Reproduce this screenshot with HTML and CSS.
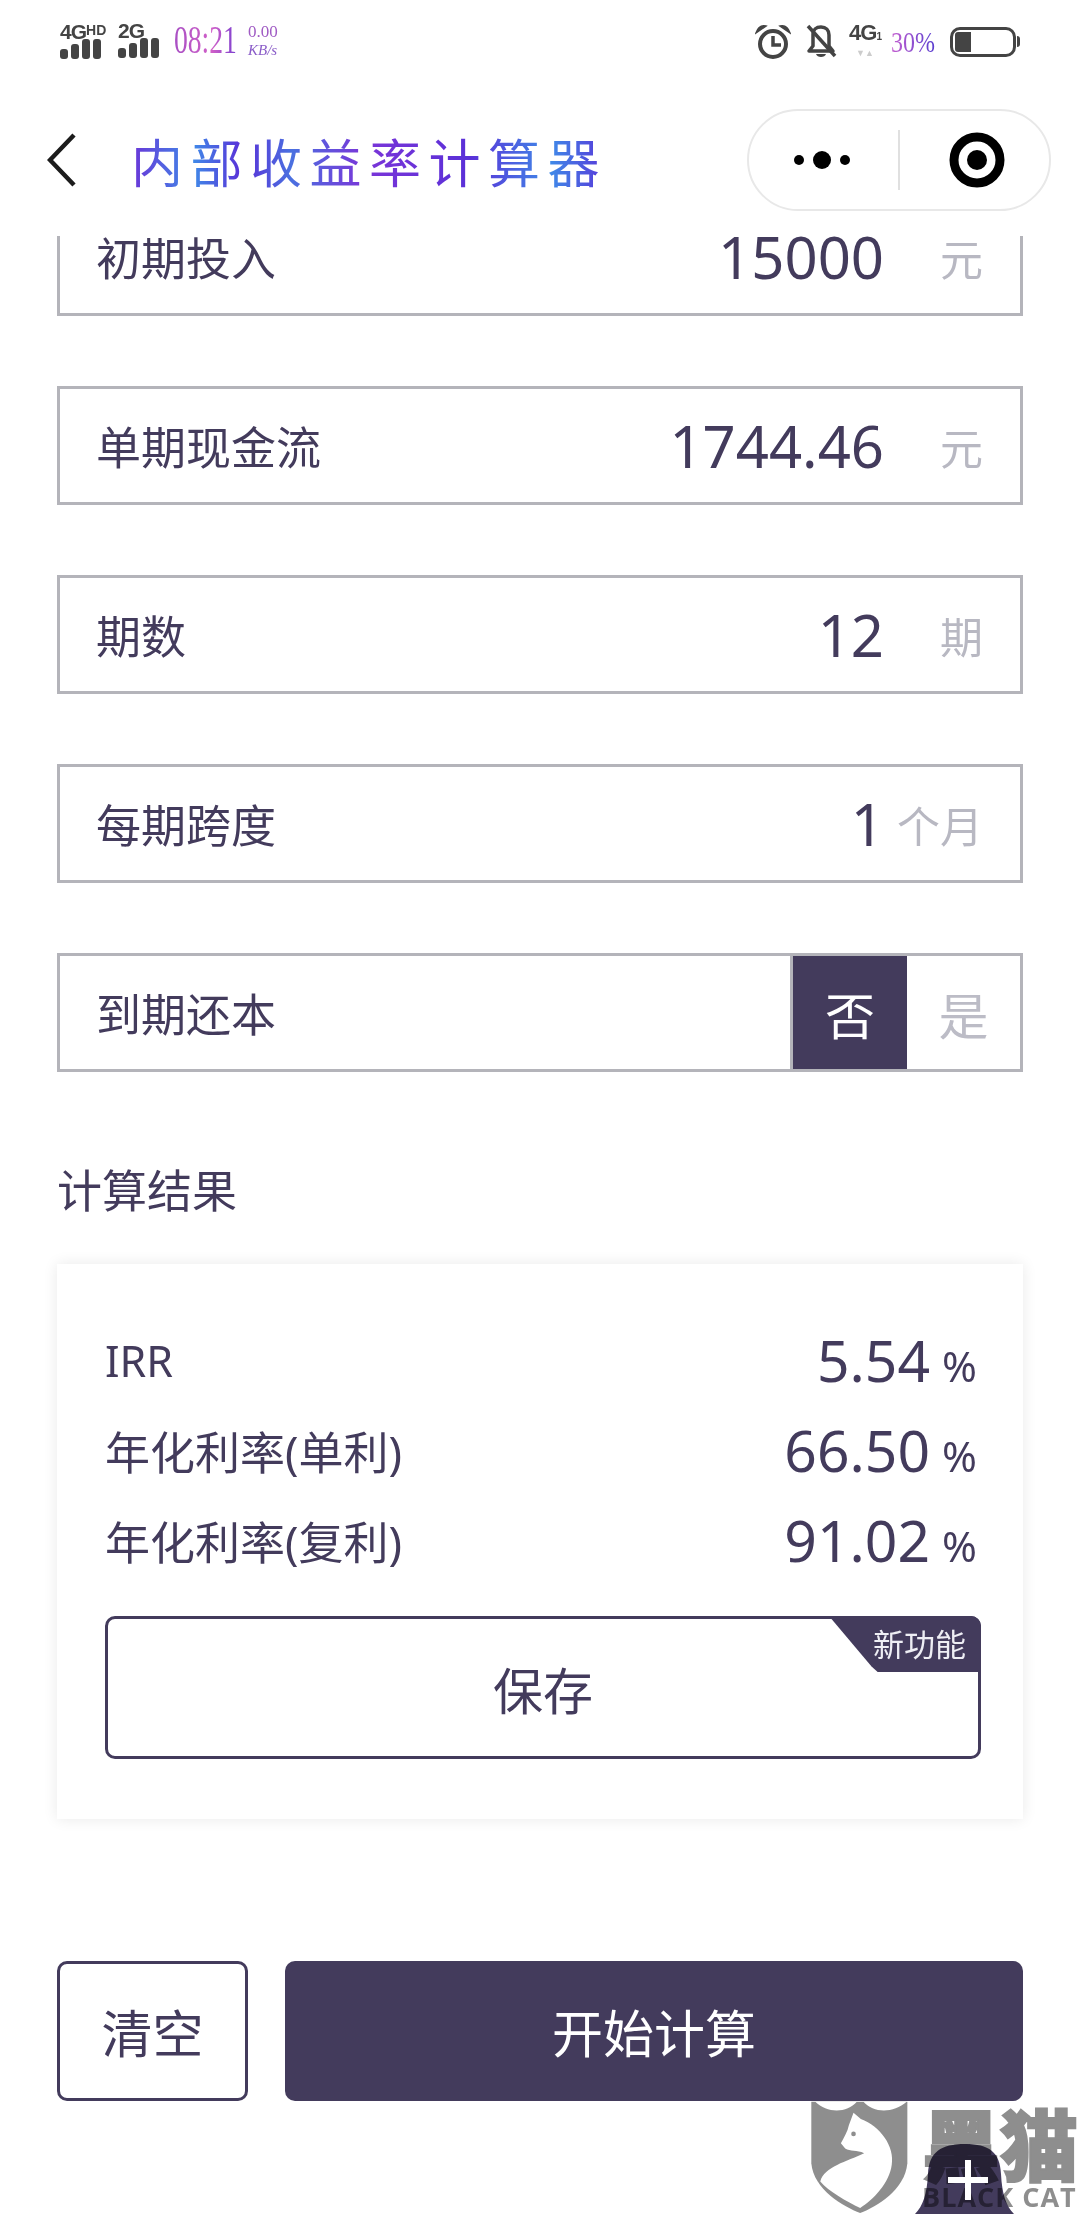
FILE: index.html
```html
<!DOCTYPE html>
<html lang="zh-CN">
  <head>
    <meta charset="UTF-8" />
    <meta name="viewport" content="width=device-width, initial-scale=1.0" />
    <title>内部收益率计算器</title>
    <link rel="stylesheet" href="styles.css">
  </head>
  <body>
    <div class="page">
      <div class="status-bar">
        <div class="status-left">
          <div class="sim">
            <span class="sim-name">4G<b>HD</b></span>
            <div class="bars"><i class="b1"></i><i class="b2"></i><i class="b3"></i><i class="b3"></i></div>
          </div>
          <div class="sim sim-two">
            <span class="sim-name">2G</span>
            <div class="bars"><i class="b1"></i><i class="b2"></i><i class="b3"></i><i class="b3"></i></div>
          </div>
          <span class="time">08:21</span>
          <div class="speed"><span>0.00</span><span class="speed-unit">KB/s</span></div>
        </div>
        <div class="status-right">
          <svg class="alarm" width="36" height="36" viewBox="0 0 36 36">
            <circle cx="18" cy="20" r="13" fill="none" stroke="#444" stroke-width="4" />
            <path d="M18 12v9h8" fill="none" stroke="#444" stroke-width="3.5" />
            <path d="M1 9 C3 3 7 1 11 2 Z M35 9 C33 3 29 1 25 2 Z" fill="#444" stroke="#444" stroke-width="1.5" />
          </svg>
          <svg class="bell" width="32" height="36" viewBox="0 0 32 36">
            <path d="M8 10 C8 6 11 3 16 3 C21 3 24 6 24 11 V22 L28 27 H4 L8 22 Z" fill="none" stroke="#444" stroke-width="3.5" stroke-linejoin="round" />
            <path d="M11 30 C12 34 20 34 21 30 Z" fill="#444" />
            <path d="M3 2 L30 32" stroke="#444" stroke-width="3.5" />
          </svg>
          <div class="net">
            <span class="net-name">4G<b>1</b></span>
            <span class="net-arrows">▼▲</span>
          </div>
          <span class="battery-text">30%</span>
          <div class="battery"><div class="battery-level"></div></div>
        </div>
      </div>

      <div class="nav">
        <svg class="back" width="30" height="54" viewBox="0 0 30 54">
          <path d="M27 2 L3 27 L27 52" fill="none" stroke="#1c1c1c" stroke-width="4.5" />
        </svg>
        <h1 class="nav-title">内部收益率计算器</h1>
        <div class="capsule">
          <div class="capsule-more">
            <svg width="66" height="20" viewBox="0 0 66 20">
              <circle cx="6" cy="10" r="5" fill="#000" />
              <circle cx="29" cy="10" r="9" fill="#000" />
              <circle cx="52" cy="10" r="5" fill="#000" />
            </svg>
          </div>
          <div class="capsule-line"></div>
          <div class="capsule-close">
            <svg width="56" height="56" viewBox="0 0 56 56">
              <circle cx="28" cy="28" r="23" fill="none" stroke="#000" stroke-width="9" />
              <circle cx="28" cy="28" r="10" fill="#000" />
            </svg>
          </div>
        </div>
      </div>

      <div class="scroll">
        <div class="scroll-inner">
          <div class="field">
            <span class="field-label">初期投入</span>
            <span class="field-value">15000</span>
            <span class="field-unit">元</span>
          </div>
          <div class="field">
            <span class="field-label">单期现金流</span>
            <span class="field-value">1744.46</span>
            <span class="field-unit">元</span>
          </div>
          <div class="field">
            <span class="field-label">期数</span>
            <span class="field-value">12</span>
            <span class="field-unit">期</span>
          </div>
          <div class="field">
            <span class="field-label">每期跨度</span>
            <span class="field-value">1</span>
            <span class="field-unit">个月</span>
          </div>
          <div class="field field-toggle">
            <span class="field-label">到期还本</span>
            <div class="toggle toggle-on">否</div>
            <div class="toggle">是</div>
          </div>

          <div class="result-title">计算结果</div>
          <div class="card">
            <div class="result-row">
              <span class="result-name">IRR</span>
              <span class="result-value">5.54</span>
              <span class="result-unit">%</span>
            </div>
            <div class="result-row">
              <span class="result-name">年化利率(单利)</span>
              <span class="result-value">66.50</span>
              <span class="result-unit">%</span>
            </div>
            <div class="result-row">
              <span class="result-name">年化利率(复利)</span>
              <span class="result-value">91.02</span>
              <span class="result-unit">%</span>
            </div>
            <div class="save">
              保存
              <span class="save-tag">新功能</span>
            </div>
          </div>

          <div class="actions">
            <div class="btn-clear">清空</div>
            <div class="btn-start">开始计算</div>
          </div>
        </div>
      </div>

      <svg class="fab" width="100" height="70" viewBox="0 0 100 70">
        <path d="M0 70 C8 62 12 50 13 30 C14 8 26 0 50 0 C74 0 85 8 86 30 C87 50 91 62 99 70 Z" fill="#433b5c" />
      </svg>
      <div class="watermark">
        <svg class="shield" width="97" height="113" viewBox="333 150 290 340">
          <path d="M333 155 H622 V340 C615 420 530 470 480 490 C430 470 340 420 333 340 Z" fill="#8e8e8e" />
          <path d="M345 155 C380 190 440 190 470 155 Z M490 155 C520 190 580 190 620 155 Z" fill="#fff" />
          <path d="M460 188 L482 207 C540 228 585 290 575 345 C568 400 520 450 480 475 C440 455 385 425 360 395 C372 350 440 335 492 310 C470 300 450 305 435 296 L422 280 C432 262 442 245 446 226 Z" fill="#fff" />
          <circle cx="460" cy="252" r="7" fill="#8e8e8e" />
        </svg>
        <div class="mark-text">
          <span class="mark-cn">黑猫</span>
          <span class="mark-en">BLACK CAT</span>
        </div>
      </div>
      <svg class="fab-plus" width="40" height="40" viewBox="0 0 40 40">
        <path d="M20 1 V39 M1 20 H39" stroke="#fff" stroke-width="6" stroke-linecap="round" />
      </svg>
    </div>
  </body>
</html>
```

FILE: styles.css
```css
* {
  box-sizing: border-box;
}
body {
  margin: 0;
  background: #fff;
  color: #433b5c;
  font-family: "Noto Sans", "Noto Sans CJK SC", sans-serif;
}
.page {
  position: relative;
  width: 1080px;
  height: 2214px;
  overflow: hidden;
  display: flex;
  flex-direction: column;
}

/* status bar */
.status-bar {
  height: 76px;
  flex: none;
  display: flex;
  justify-content: space-between;
  padding: 22px 64px 0 60px;
  color: #444;
}
.status-left,
.status-right {
  display: flex;
  align-items: flex-start;
}
.sim {
  width: 58px;
  display: flex;
  flex-direction: column;
  font-family: "Liberation Sans", sans-serif;
}
.sim-name {
  font-size: 21px;
  font-weight: bold;
  line-height: 15px;
  letter-spacing: -1px;
  margin-top: 1px;
  white-space: nowrap;
}
.sim-name b {
  font-size: 14px;
  letter-spacing: 0;
  vertical-align: 4px;
}
.bars {
  display: flex;
  align-items: flex-end;
  gap: 3px;
  height: 20px;
}
.bars i {
  width: 8px;
  background: #444;
  border-radius: 3px;
}
.bars .b1 {
  height: 10px;
}
.bars .b2 {
  height: 15px;
}
.bars .b3 {
  height: 20px;
}
.sim-two {
  width: 56px;
}
.time {
  width: 91px;
  margin-right: -17px;
  font-family: "Liberation Serif", serif;
  font-size: 40px;
  line-height: 36px;
  white-space: nowrap;
  transform: scaleX(0.69);
  transform-origin: left top;
  background: linear-gradient(90deg, #a84fc4, #d05fc8 60%, #7a3fd0);
  -webkit-background-clip: text;
  background-clip: text;
  color: transparent;
}
.speed {
  display: flex;
  flex-direction: column;
  font-family: "Liberation Serif", serif;
  font-size: 17px;
  line-height: 19px;
  color: #a05cc4;
}
.speed-unit {
  font-size: 15px;
  font-style: italic;
  color: #8a5cc8;
}
.alarm {
  margin-top: 2px;
}
.bell {
  margin-left: 14px;
  margin-top: 2px;
}
.net {
  width: 36px;
  margin-left: 10px;
  display: flex;
  flex-direction: column;
  align-items: center;
  font-family: "Liberation Sans", sans-serif;
}
.net-name {
  font-size: 22px;
  font-weight: bold;
  line-height: 22px;
  letter-spacing: -1px;
}
.net-name b {
  font-size: 10px;
}
.net-arrows {
  font-size: 9px;
  line-height: 10px;
  color: #ccc;
}
.battery-text {
  width: 55px;
  margin-left: 8px;
  margin-right: -11px;
  margin-top: 5px;
  font-family: "Liberation Serif", serif;
  font-size: 30px;
  line-height: 30px;
  white-space: nowrap;
  transform: scaleX(0.8);
  transform-origin: left top;
  background: linear-gradient(90deg, #c45fd0, #5a3fd0);
  -webkit-background-clip: text;
  background-clip: text;
  color: transparent;
}
.battery {
  position: relative;
  width: 66px;
  height: 30px;
  margin-left: 15px;
  margin-top: 5px;
  border: 3.5px solid #444;
  border-radius: 10px;
  padding: 2px;
}
.battery::after {
  content: "";
  position: absolute;
  right: -7px;
  top: 6px;
  width: 3px;
  height: 11px;
  background: #444;
  border-radius: 0 3px 3px 0;
}
.battery-level {
  width: 16px;
  height: 100%;
  background: #444;
  border-radius: 3px 0 0 3px;
}

/* nav */
.nav {
  height: 160px;
  flex: none;
  display: flex;
  align-items: center;
  padding: 8px 29px 0 47px;
  background: #fff;
}
.back {
  flex: none;
}
.nav-title {
  flex: 1;
  margin: 0 0 0 54px;
  font-size: 52px;
  font-weight: normal;
  letter-spacing: 7.5px;
  white-space: nowrap;
  background: linear-gradient(90deg, #6a35d8, #3f8ae8 10%, #5a30d8 18%, #4a70e0 26%, #7a35d8 38%, #5a30d8 55%, #3f8ae8 68%, #5a30d8 78%, #b050e0);
  -webkit-background-clip: text;
  background-clip: text;
  color: transparent;
}
.capsule {
  width: 304px;
  height: 102px;
  flex: none;
  display: flex;
  align-items: center;
  border: 2px solid #e8e8e8;
  border-radius: 51px;
}
.capsule-more,
.capsule-close {
  flex: 1;
  display: flex;
  justify-content: center;
  padding-left: 4px;
}
.capsule-line {
  width: 2px;
  height: 60px;
  background: #e0e0e0;
}

/* form */
.scroll {
  flex: 1;
  overflow: hidden;
  padding: 0 57px;
}
.scroll-inner {
  margin-top: -39px;
}
.field {
  height: 119px;
  margin-bottom: 70px;
  display: flex;
  align-items: center;
  padding: 0 37px 0 36px;
  border: 3px solid #b4b4ba;
}
.field-label {
  flex: 1;
  font-family: "Noto Sans CJK SC", sans-serif;
  font-size: 45px;
}
.field-value {
  font-size: 58px;
}
.field-unit {
  min-width: 99px;
  text-align: right;
  font-family: "Noto Sans CJK SC", sans-serif;
  font-size: 43px;
  color: #b8b8c2;
}
.field-toggle {
  margin-bottom: 0;
  padding-right: 0;
}
.toggle {
  width: 113px;
  height: 100%;
  display: flex;
  align-items: center;
  justify-content: center;
  font-family: "Noto Sans CJK SC", sans-serif;
  font-size: 50px;
  color: #bcbcc6;
}
.toggle-on {
  width: 117px;
  border-left: 3px solid #b4b4ba;
  background: #433b5c;
  color: #fff;
}

/* results */
.result-title {
  margin: 87px 0 45px;
  height: 60px;
  line-height: 60px;
  font-family: "Noto Sans CJK SC", sans-serif;
  font-size: 45px;
}
.card {
  padding: 51px 48px 60px;
  background: #fff;
  box-shadow: 0 0 14px rgba(0, 0, 0, 0.09);
}
.result-row {
  height: 90px;
  margin-right: -2px;
  display: flex;
  align-items: center;
}
.result-name {
  flex: 1;
  font-size: 45px;
}
.result-row:first-child .result-name {
  font-size: 43px;
}
.result-value {
  font-size: 57px;
}
.result-unit {
  width: 47px;
  text-align: right;
  font-size: 42px;
  padding-top: 10px;
}
.save {
  position: relative;
  height: 143px;
  margin: 31px -6px 0 0;
  display: flex;
  align-items: center;
  justify-content: center;
  border: 3px solid #433b5c;
  border-radius: 10px;
  font-family: "Noto Sans CJK SC", sans-serif;
  font-size: 50px;
}
.save-tag {
  position: absolute;
  top: -3px;
  right: -3px;
  width: 152px;
  height: 56px;
  padding: 0 15px 4px 0;
  display: flex;
  align-items: center;
  justify-content: flex-end;
  background: #433b5c;
  color: #eeeef4;
  font-size: 31px;
  border-radius: 0 10px 0 0;
  clip-path: polygon(0 0, 100% 0, 100% 100%, 32% 100%, 28% 90%);
}

/* bottom buttons */
.actions {
  display: flex;
  gap: 37px;
  margin-top: 142px;
}
.btn-clear,
.btn-start {
  height: 140px;
  display: flex;
  align-items: center;
  justify-content: center;
  border-radius: 10px;
  font-family: "Noto Sans CJK SC", sans-serif;
  font-size: 51px;
}
.btn-clear {
  width: 191px;
  flex: none;
  border: 3px solid #433b5c;
}
.btn-start {
  flex: 1;
  background: #433b5c;
  color: #fff;
}

/* floating button + watermark on top of the page */
.fab {
  position: absolute;
  left: 915px;
  top: 2144px;
}
.fab-plus {
  position: absolute;
  left: 948px;
  top: 2160px;
}
.watermark {
  position: absolute;
  left: 811px;
  top: 2100px;
  display: flex;
  gap: 14px;
  mix-blend-mode: multiply;
  color: #8e8e8e;
}
.mark-text {
  display: flex;
  flex-direction: column;
  font-weight: bold;
}
.mark-cn {
  font-family: "Noto Sans CJK SC", sans-serif;
  font-size: 78px;
  font-weight: 900;
  line-height: 84px;
  -webkit-text-stroke: 2px #8e8e8e;
}
.mark-en {
  font-family: "Open Sans", sans-serif;
  font-size: 27px;
  line-height: 26px;
  letter-spacing: 1px;
  white-space: nowrap;
}
```
